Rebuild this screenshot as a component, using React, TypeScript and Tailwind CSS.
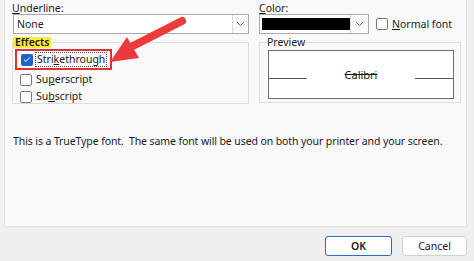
import React from "react";

function Chevron() {
    return (
        <svg width="9" height="6" viewBox="0 0 9 6" className="text-[#5f5f5f]">
            <path d="M1 1 L4.5 4.5 L8 1" fill="none" stroke="currentColor" strokeWidth="1" />
        </svg>
    );
}

function Box({ checked = false }: { checked?: boolean }) {
    if (checked) {
        return (
            <span className="w-[12px] h-[12px] rounded-[2px] bg-[#1e63c9] flex items-center justify-center shrink-0">
                <svg width="8" height="7" viewBox="0 0 8 7">
                    <path d="M1 3.6 L3 5.5 L7 1.3" fill="none" stroke="white" strokeWidth="1" />
                </svg>
            </span>
        );
    }
    return <span className="w-[12px] h-[12px] rounded-[2px] border border-[#7a7a7a] bg-white shrink-0" />;
}

export default function App() {
    return (
        <div className="relative w-[474px] h-[261px] bg-[#efefef] overflow-hidden text-[#1b1b1b] text-[10.5px] leading-[13px]" style={{ fontFamily: '"Noto Sans", "Open Sans", sans-serif' }}>
            {/* dialog body */}
            <div className="ml-[4px] w-[463px] h-[227px] bg-[#f9f9f9] border-l border-r border-b border-[#e2e2e2] pl-[7px] pt-[2px]">
                <div className="flex">
                    {/* left column */}
                    <div className="w-[237px] flex flex-col">
                        <div className="h-[12px]"><span className="underline">U</span>nderline:</div>
                        <div className="ml-[1px] h-[20px] bg-white border border-[#a8a8a8] flex items-center">
                            <span className="pl-[3px] flex-1">None</span>
                            <span className="w-[16px] h-full border-l border-[#dadada] flex items-center justify-center"><Chevron /></span>
                        </div>

                        <fieldset className="mt-[3px] border border-[#dcdcdc] h-[67px] pl-[1px]">
                            <legend className="bg-[#f4f03a] px-[2px] -ml-[1px] leading-[11px] font-semibold">Effects</legend>
                            <div className="flex flex-col">
                                <div className="mt-[1px] ml-[1px] w-[97px] h-[21px] border-2 border-[#e0302f] flex items-center pl-[4px]">
                                    <Box checked />
                                    <span className="ml-[2px] px-[1px] border border-dotted border-[#555]">Stri<span className="underline">k</span>ethrough</span>
                                </div>
                                <div className="flex items-center mt-[2px] ml-[6px] h-[15px]">
                                    <Box />
                                    <span className="ml-[4px]">Su<span className="underline">p</span>erscript</span>
                                </div>
                                <div className="flex items-center mt-[2px] ml-[6px] h-[15px]">
                                    <Box />
                                    <span className="ml-[4px]">Su<span className="underline">b</span>script</span>
                                </div>
                            </div>
                        </fieldset>
                    </div>

                    {/* right column */}
                    <div className="ml-[10px] w-[202px] flex flex-col">
                        <div className="h-[12px]"><span className="underline">C</span>olor:</div>
                        <div className="flex items-center">
                            <div className="w-[110px] h-[20px] bg-white border border-[#a8a8a8] flex items-center">
                                <span className="ml-[2px] w-[88px] h-[12px] bg-black" />
                                <span className="ml-auto w-[18px] h-full border-l border-[#dadada] flex items-center justify-center"><Chevron /></span>
                            </div>
                            <span className="ml-[7px] flex items-center gap-[4px]">
                                <Box />
                                <span><span className="underline">N</span>ormal font</span>
                            </span>
                        </div>

                        <fieldset className="mt-[3px] border border-[#dcdcdc] h-[66px] pl-[8px] pr-[6px]">
                            <legend className="px-[1px] -ml-[2px] leading-[11px]">Preview</legend>
                            <div className="mt-[2px] h-[49px] bg-white border border-[#6d6d6d] flex items-center">
                                <span className="w-[38px] h-[1px] bg-[#555] mt-[7px]" />
                                <span className="flex-1 text-center text-[11px] line-through">Calibri</span>
                                <span className="w-[38px] h-[1px] bg-[#555] mt-[7px]" />
                            </div>
                        </fieldset>
                    </div>
                </div>

                <p className="mt-[31px] ml-[1px] tracking-[-0.1px]">This is a TrueType font.&nbsp; The same font will be used on both your printer and your screen.</p>
            </div>

            {/* buttons */}
            <div className="flex justify-end gap-[10px] pr-[7px] pt-[9px]">
                <button className="w-[67px] h-[20px] bg-white border-[1.5px] border-[#2b6cc7] rounded-[3px] font-semibold">OK</button>
                <button className="w-[65px] h-[20px] bg-white border border-[#d0d0d0] rounded-[3px]">Cancel</button>
            </div>

            {/* callout arrow */}
            <svg className="absolute left-0 top-0 pointer-events-none" width="474" height="261">
                <line x1="182" y1="21" x2="127" y2="49" stroke="#ec3a3c" strokeWidth="8" strokeLinecap="round" />
                <polygon points="110,62 127,37 139,58" fill="#ec3a3c" />
            </svg>
        </div>
    );
}
